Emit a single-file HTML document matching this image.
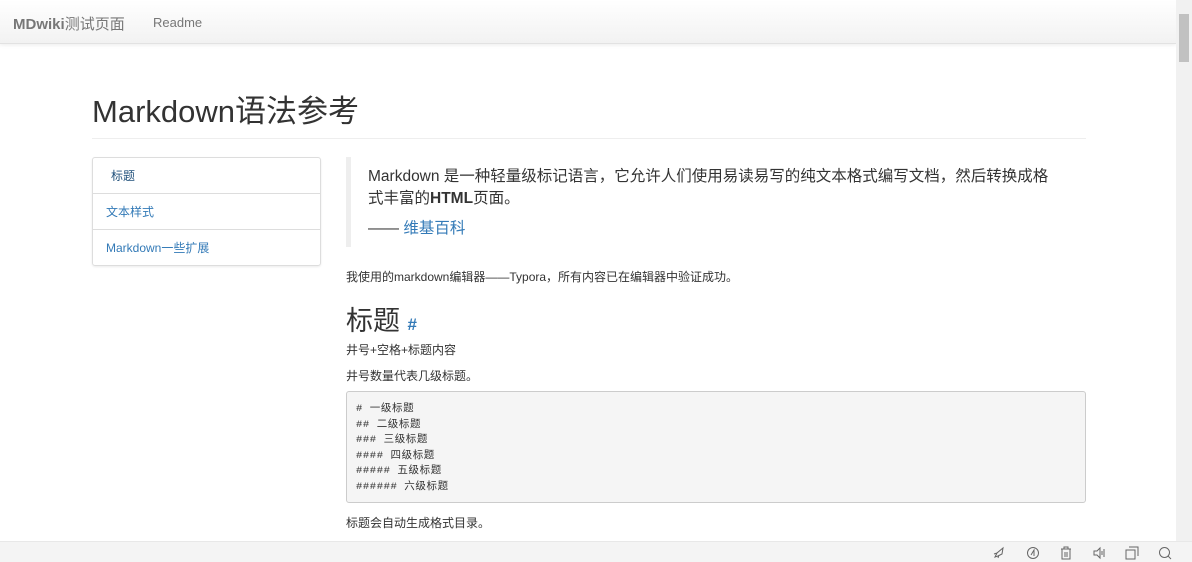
<!DOCTYPE html>
<html><head><meta charset="utf-8"><style>
*{box-sizing:border-box;margin:0;padding:0}
body{width:1192px;height:562px;overflow:hidden;background:#fff;font-family:"Liberation Sans","Noto Sans CJK SC",sans-serif;color:#333;position:relative}
.nav{position:absolute;left:0;top:0;width:1176px;height:44px;background:linear-gradient(#fff,#f2f2f2);border-bottom:1px solid #e2e2e2;box-shadow:0 1px 4px rgba(0,0,0,.08)}
.brand{position:absolute;left:13px;top:13px;font-size:15px;color:#777;font-weight:bold}
.brand span{font-weight:normal}
.readme{position:absolute;left:153px;top:15px;font-size:13px;color:#777}
h1{position:absolute;left:92px;top:86px;font-size:31px;font-weight:normal;color:#333}
.hr{position:absolute;left:92px;top:138px;width:994px;border-top:1px solid #eee}
.toc{position:absolute;left:92px;top:157px;width:229px;border:1px solid #ddd;border-radius:3px;box-shadow:0 1px 2px rgba(0,0,0,.08);font-size:12px}
.toc div{height:36px;line-height:36px;padding-left:13px;color:#337ab7;border-top:1px solid #ddd}
.toc div:first-child{border-top:0;padding-left:18px;color:#23527c;height:35px}
.bq{position:absolute;left:346px;top:157px;border-left:5px solid #eee;padding:9px 0 0 17px;width:717px;font-size:15.5px;line-height:22px;height:90px}
.bq .src{margin-top:8px}
.bq a{color:#337ab7}
.p{position:absolute;left:346px;font-size:12px}
h2{position:absolute;left:346px;top:299px;font-size:27px;font-weight:normal}
h2 b{color:#337ab7;font-size:17px}
pre{position:absolute;left:346px;top:391px;width:740px;height:112px;background:#f5f5f5;border:1px solid #ccc;border-radius:3px;padding:10px 9px;font-family:"Liberation Mono","Noto Sans CJK SC",monospace;font-size:10.5px;line-height:15.6px;color:#333;letter-spacing:0.6px}
.sb{position:absolute;right:0;top:0;width:16px;height:541px;background:#f1f1f1}
.sb i{position:absolute;left:3px;top:14px;width:10px;height:48px;background:#c1c1c1}
.bot{position:absolute;left:0;top:541px;width:1192px;height:21px;background:#f4f4f4;border-top:1px solid #e8e8e8}
.bot svg{position:absolute;top:4px}
</style></head><body>
<div class="nav"><div class="brand">MDwiki<span>测试页面</span></div><div class="readme">Readme</div></div>
<h1>Markdown语法参考</h1>
<div class="hr"></div>
<div class="toc"><div>标题</div><div>文本样式</div><div>Markdown一些扩展</div></div>
<div class="bq">Markdown 是一种轻量级标记语言，它允许人们使用易读易写的纯文本格式编写文档，然后转换成格式丰富的<b>HTML</b>页面。<div class="src">—— <a>维基百科</a></div></div>
<div class="p" style="top:268px">我使用的markdown编辑器——Typora，所有内容已在编辑器中验证成功。</div>
<h2>标题 <b>#</b></h2>
<div class="p" style="top:341px">井号+空格+标题内容</div>
<div class="p" style="top:367px">井号数量代表几级标题。</div>
<pre># 一级标题
## 二级标题
### 三级标题
#### 四级标题
##### 五级标题
###### 六级标题</pre>
<div class="p" style="top:514px">标题会自动生成格式目录。</div>
<div class="sb"><i></i></div>
<div class="bot">
<svg style="left:992px" width="14" height="14" viewBox="0 0 14 14" fill="none" stroke="#666"><path d="M3 11l2-4 6-5-1 6-4 2z M2 8l3-1 M6 12l1-3"/></svg>
<svg style="left:1026px" width="14" height="14" viewBox="0 0 14 14" fill="none" stroke="#666"><circle cx="7" cy="7" r="5.5"/><path d="M5 9l3-5v6"/></svg>
<svg style="left:1059px" width="14" height="14" viewBox="0 0 14 14" fill="none" stroke="#666"><path d="M2 3h10M5 3V1h4v2M3 3v10h8V3M6 6v5M8 6v5"/></svg>
<svg style="left:1092px" width="14" height="14" viewBox="0 0 14 14" fill="none" stroke="#666"><path d="M2 5h3l3-3v10l-3-3H2zM10 5v4M12 3v8"/></svg>
<svg style="left:1125px" width="14" height="14" viewBox="0 0 14 14" fill="none" stroke="#666"><path d="M4 1h9v9M1 4h9v9H1z"/></svg>
<svg style="left:1158px" width="14" height="14" viewBox="0 0 14 14" fill="none" stroke="#666"><circle cx="6.5" cy="6.5" r="5"/><path d="M10 10l3 3"/></svg>
</div>
</body></html>
